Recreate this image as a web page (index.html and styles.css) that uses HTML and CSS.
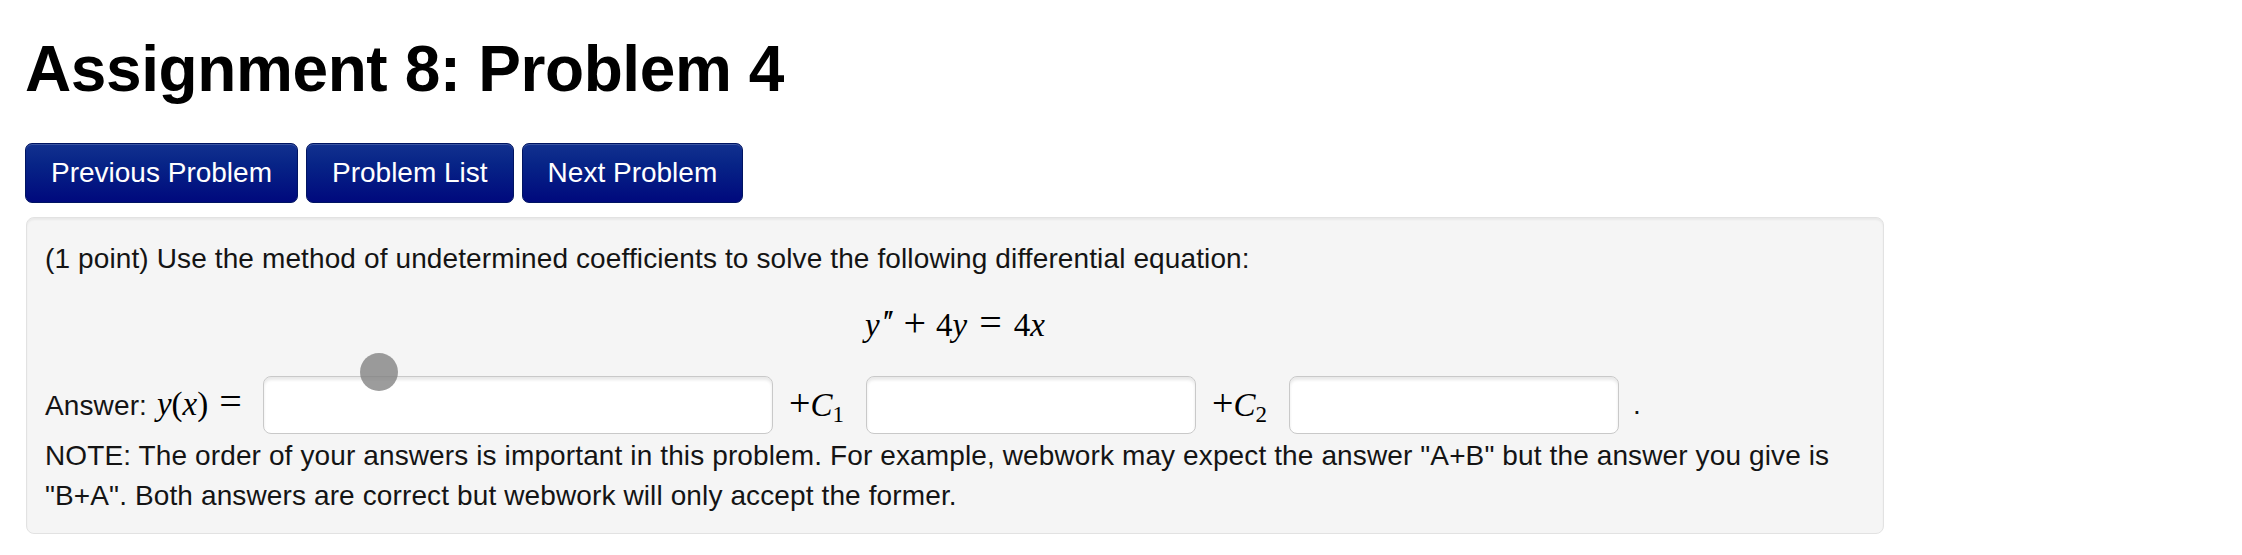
FILE: index.html
```html
<!DOCTYPE html>
<html lang="en">
<head>
<meta charset="utf-8">
<title>Assignment 8: Problem 4</title>
<link rel="stylesheet" href="styles.css">
</head>
<body>
<div class="page">
  <h1 class="title">Assignment 8: Problem 4</h1>
  <div class="nav">
    <a class="btn" href="#">Previous Problem</a>
    <a class="btn" href="#">Problem List</a>
    <a class="btn" href="#">Next Problem</a>
  </div>
  <div class="problem">
    <p class="intro">(1 point) Use the method of undetermined coefficients to solve the following differential equation:</p>
    <div class="display-math">
      <span class="math"><span class="mi">y</span><span class="prime">′′</span><span class="mo">+</span><span class="mn">4</span><span class="mi">y</span><span class="mo eq">=</span><span class="mn">4</span><span class="mi">x</span></span>
    </div>
    <div class="answer-row">
      <span class="label">Answer: <span class="math label-math"><span class="mi">y</span><span class="mp">(</span><span class="mi">x</span><span class="mp">)</span><span class="mo eq-inline">=</span></span></span>
      <span class="field field-wide"><input class="answer" type="text" aria-label="particular solution"><span class="touch"></span></span>
      <span class="coef math"><span class="mo-tight">+</span><span class="mi">C</span><sub class="sub">1</sub></span>
      <span class="field field-mid"><input class="answer" type="text" aria-label="first solution"></span>
      <span class="coef math"><span class="mo-tight">+</span><span class="mi">C</span><sub class="sub">2</sub></span>
      <span class="field field-mid"><input class="answer" type="text" aria-label="second solution"></span>
      <span class="period">.</span>
    </div>
    <p class="note">NOTE: The order of your answers is important in this problem. For example, webwork may expect the answer "A+B" but the answer you give is "B+A". Both answers are correct but webwork will only accept the former.</p>
  </div>
</div>
</body>
</html>
```

FILE: styles.css
```css
html, body {
  margin: 0;
  padding: 0;
  background: #ffffff;
}

body {
  font-family: "Liberation Sans", Arial, Helvetica, sans-serif;
  color: #141414;
}

.page {
  padding: 0 0 0 25px;
}

.title {
  margin: 34px 0 0 0;
  font-size: 64px;
  line-height: 70px;
  font-weight: bold;
  letter-spacing: -0.4px;
  color: #000;
}

.nav {
  display: flex;
  gap: 8px;
  margin-top: 39px;
}

.btn {
  display: block;
  box-sizing: border-box;
  height: 60px;
  padding: 12px 25px;
  font-size: 28px;
  line-height: 34px;
  color: #ffffff;
  text-decoration: none;
  border: 1px solid #001462;
  border-radius: 7px;
  background: linear-gradient(to bottom, #12318f 0%, #072487 35%, #00097d 100%);
  box-shadow: inset 0 1px 0 rgba(255, 255, 255, 0.18);
}

.problem {
  box-sizing: border-box;
  width: 1858px;
  margin: 14px 0 0 1px;
  padding: 21px 18px 17px 18px;
  background: #f5f5f5;
  border: 1px solid #e2e2e2;
  border-radius: 8px;
  box-shadow: inset 0 2px 2px rgba(0, 0, 0, 0.05);
  font-size: 28px;
  line-height: 40px;
  letter-spacing: 0.12px;
}

.intro {
  margin: 0;
}

.display-math {
  margin-top: 26px;
  height: 40px;
  text-align: center;
  line-height: 40px;
}

.math {
  font-family: "Liberation Serif", "Times New Roman", serif;
  font-size: 33px;
  letter-spacing: 0;
  color: #000;
}

.label-math {
  margin-left: 2px;
}

.mi {
  font-style: italic;
}

.mn, .mp {
  font-style: normal;
}

.prime {
  font-style: italic;
  font-size: 34px;
  margin-left: 1px;
  margin-right: 4px;
  letter-spacing: -3px;
  position: relative;
  top: -3px;
}

.mo {
  display: inline-block;
  font-size: 40px;
  margin: 0 10px;
  line-height: 30px;
}

.mo.eq {
  margin: 0 12px;
}

.mo.eq-inline {
  margin: 0 0 0 11px;
}

.mo-tight {
  font-size: 38px;
  line-height: 30px;
}

.answer-row {
  display: flex;
  align-items: center;
  margin-top: 31px;
  height: 58px;
}

.label {
  flex: 0 0 197px;
  width: 197px;
  min-width: 0;
  white-space: nowrap;
}

.field {
  position: relative;
  display: block;
  flex: 0 0 auto;
  height: 58px;
}

.field-wide {
  width: 510px;
  margin-left: 21px;
}

.field-mid {
  width: 330px;
  margin-left: 19px;
}

.answer {
  display: block;
  box-sizing: border-box;
  width: 100%;
  height: 58px;
  margin: 0;
  padding: 8px 12px;
  font-size: 28px;
  font-family: inherit;
  background: #ffffff;
  border: 1px solid #c9c9c9;
  border-radius: 8px;
  box-shadow: inset 0 3px 3px rgba(0, 0, 0, 0.09);
}

.coef {
  flex: 0 0 58px;
  width: 58px;
  min-width: 0;
  margin-left: 16px;
  white-space: nowrap;
}

.sub {
  font-style: normal;
  font-size: 23px;
  line-height: 0;
  position: relative;
  top: 6px;
  vertical-align: baseline;
}

.period {
  margin-left: 14px;
  font-size: 28px;
}

.touch {
  position: absolute;
  left: 97px;
  top: -23px;
  width: 38px;
  height: 38px;
  border-radius: 50%;
  background: rgba(128, 128, 128, 0.78);
}

.note {
  margin: 2px 0 0 0;
}
```
